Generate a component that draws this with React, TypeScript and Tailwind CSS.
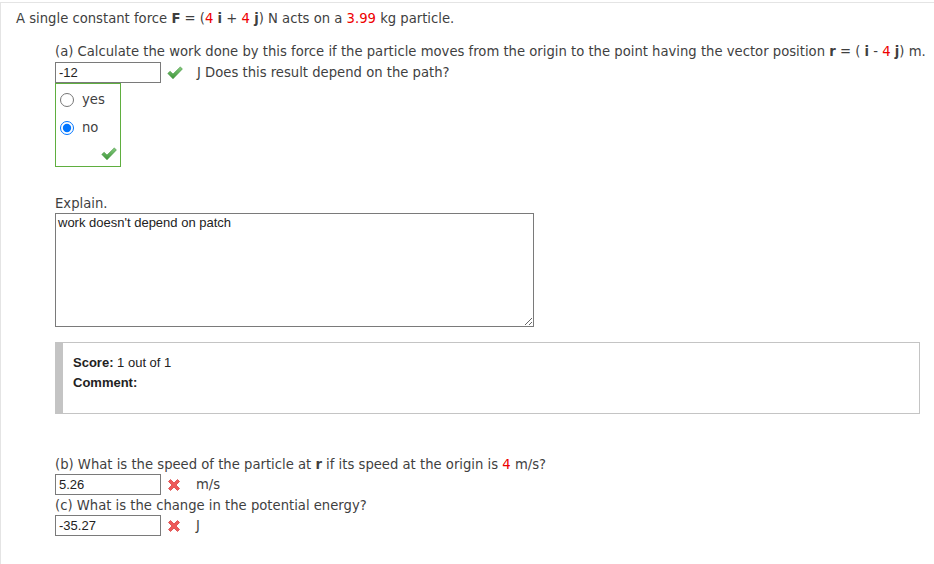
import React from "react";

const verdana = { fontFamily: '"DejaVu Sans", Verdana, sans-serif' };
const arial = { fontFamily: '"Liberation Sans", Arial, sans-serif' };

function Check({ className = "" }: { className?: string }) {
  return (
    <svg viewBox="0 0 16 14" className={className} width="16" height="14">
      <defs>
        <linearGradient id="chk" x1="0" y1="0" x2="0" y2="1">
          <stop offset="0" stopColor="#86cc7f" />
          <stop offset="1" stopColor="#3c9537" />
        </linearGradient>
      </defs>
      <path
        d="M0.8 7.4 L3.1 5.3 L6 8.1 L13.3 0.9 L15.4 3 L6 12.8 Z"
        fill="url(#chk)"
        stroke="#3d8f38"
        strokeWidth="0.6"
        strokeLinejoin="round"
      />
    </svg>
  );
}

function Cross({ className = "" }: { className?: string }) {
  return (
    <svg viewBox="0 0 14 14" className={className} width="14" height="14">
      <path
        d="M1.5 3.5 L3.5 1.5 L7 5 L10.5 1.5 L12.5 3.5 L9 7 L12.5 10.5 L10.5 12.5 L7 9 L3.5 12.5 L1.5 10.5 L5 7 Z"
        fill="#ee5a5a"
        stroke="#d84444"
        strokeWidth="0.8"
        strokeLinejoin="round"
      />
    </svg>
  );
}

function AnswerBox({ value }: { value: string }) {
  return (
    <input
      readOnly
      value={value}
      className="h-[21px] w-[106px] border border-[#7a7a7a] px-[3px] text-[13px] text-[#222] outline-none"
      style={arial}
    />
  );
}

export default function App() {
  return (
    <div className="min-h-[564px] bg-white text-[13.2px] text-[#3f3f3f]" style={verdana}>
      <div className="mt-[2px] min-h-[562px] border-t border-l border-[#e4e4e4] pl-[15px] pt-[8px]">
        {/* Question stem */}
        <p className="leading-[16px]">
          A single constant force <b>F</b> = (<span className="text-[#ee0000]">4</span> <b>i</b> +{" "}
          <span className="text-[#ee0000]">4</span> <b>j</b>) N acts on a{" "}
          <span className="text-[#ee0000]">3.99</span> kg particle.
        </p>

        <div className="pl-[39px]">
          {/* Part a */}
          <p className="mt-[17px] whitespace-nowrap leading-[16px]">
            (a) Calculate the work done by this force if the particle moves from the origin to the point having the
            vector position <b>r</b> = ( <b>i</b> - <span className="text-[#ee0000]">4</span> <b>j</b>) m.
          </p>
          <div className="mt-[2px] flex items-center">
            <AnswerBox value="-12" />
            <Check className="ml-[6px]" />
            <span className="ml-[14px]">J Does this result depend on the path?</span>
          </div>

          <div className="flex h-[84px] w-[66px] flex-col border border-[#5fae3f] pl-[4px]">
            <label className="mt-[8px] flex items-center gap-[8px] leading-[16px]">
              <input type="radio" readOnly checked={false} className="m-0 h-[14px] w-[14px]" />
              yes
            </label>
            <label className="mt-[12px] flex items-center gap-[8px] leading-[16px]">
              <input type="radio" readOnly checked className="m-0 h-[14px] w-[14px] accent-[#0075ff]" />
              no
            </label>
            <div className="mt-auto mb-[5px] mr-[3px] flex justify-end">
              <Check />
            </div>
          </div>

          <p className="mt-[29px] leading-[16px]">Explain.</p>
          <textarea
            readOnly
            value="work doesn't depend on patch"
            className="mt-[1px] block h-[114px] w-[479px] border border-[#7a7a7a] px-[2px] py-[1px] text-[13px] leading-[16px] text-[#222] outline-none"
            style={arial}
          />

          {/* Score */}
          <div
            className="mt-[15px] h-[72px] w-[865px] border border-l-[8px] border-[#c4c4c4] pl-[10px] pt-[12px] text-[13px] text-[#222]"
            style={arial}
          >
            <p className="leading-[16px]">
              <b>Score:</b> 1 out of 1
            </p>
            <p className="mt-[4px] leading-[16px]">
              <b>Comment:</b>
            </p>
          </div>

          {/* Part b */}
          <p className="mt-[43px] leading-[16px]">
            (b) What is the speed of the particle at <b>r</b> if its speed at the origin is{" "}
            <span className="text-[#ee0000]">4</span> m/s?
          </p>
          <div className="mt-[1px] flex items-center">
            <AnswerBox value="5.26" />
            <Cross className="ml-[6px]" />
            <span className="ml-[15px]">m/s</span>
          </div>

          {/* Part c */}
          <p className="mt-[3px] leading-[16px]">(c) What is the change in the potential energy?</p>
          <div className="mt-[1px] flex items-center">
            <AnswerBox value="-35.27" />
            <Cross className="ml-[6px]" />
            <span className="ml-[15px]">J</span>
          </div>
        </div>
      </div>
    </div>
  );
}
